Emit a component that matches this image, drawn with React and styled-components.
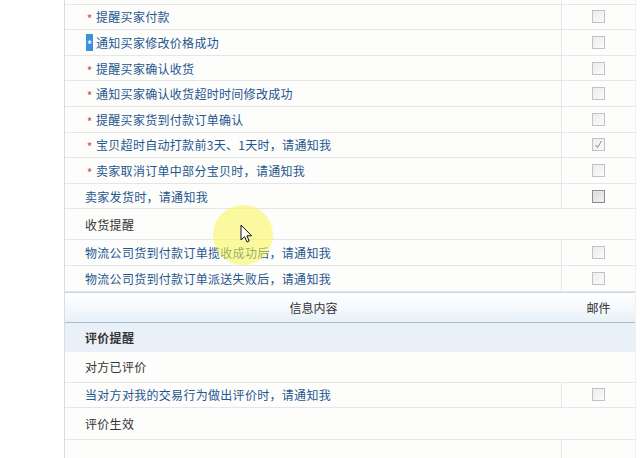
import React from 'react'
import styled, { createGlobalStyle } from 'styled-components'

const GlobalStyle = createGlobalStyle`
  html, body {
    margin: 0;
    padding: 0;
    background: #ffffff;
    overflow: hidden;
  }
  body {
    font-family: "Noto Sans CJK SC", "Liberation Sans", sans-serif;
    font-size: 12px;
  }
`

const items = [
    { text: '提醒买家付款', star: true },
    { text: '通知买家修改价格成功', star: true, selected: true },
    { text: '提醒买家确认收货', star: true },
    { text: '通知买家确认收货超时时间修改成功', star: true },
    { text: '提醒买家货到付款订单确认', star: true },
    { text: '宝贝超时自动打款前3天、1天时，请通知我', star: true, checked: true },
    { text: '卖家取消订单中部分宝贝时，请通知我', star: true },
    { text: '卖家发货时，请通知我', focus: true },
]

const receipt = [
    { text: '物流公司货到付款订单揽收成功后，请通知我' },
    { text: '物流公司货到付款订单派送失败后，请通知我' },
]

const App = () => {
    return (
        <>
            <GlobalStyle />
            <Page>
                <Table>
                    <Row>
                        <Cell />
                        <BoxCell />
                    </Row>
                    {items.map((it) => (
                        <ItemRow key={it.text} {...it} />
                    ))}
                    <SectionRow>收货提醒</SectionRow>
                    {receipt.map((it) => (
                        <ItemRow key={it.text} {...it} />
                    ))}
                    <Header>
                        <HeadCell>信息内容</HeadCell>
                        <HeadCell>邮件</HeadCell>
                    </Header>
                    <GroupRow>评价提醒</GroupRow>
                    <SectionRow>对方已评价</SectionRow>
                    <ItemRow text="当对方对我的交易行为做出评价时，请通知我" />
                    <SectionRow tall>评价生效</SectionRow>
                    <Row>
                        <Cell />
                        <BoxCell />
                    </Row>
                </Table>
                <Spot />
                <Cursor viewBox="0 0 12 19">
                    <path
                        d="M1 1 L1 16 L4.6 12.6 L7 18 L9.2 17 L6.9 11.8 L11.6 11.8 Z"
                        fill="#fff"
                        stroke="#111"
                        strokeWidth="1"
                        strokeLinejoin="round"
                    />
                </Cursor>
            </Page>
        </>
    )
}

const ItemRow = ({ text, star, selected, checked, focus }) => (
    <Row>
        <Cell>
            {star && <Star selected={selected}>*</Star>}
            <Link>{text}</Link>
        </Cell>
        <BoxCell>
            <Check checked={checked} focus={focus}>
                {checked && (
                    <svg width="9" height="9" viewBox="0 0 9 9">
                        <path d="M1.5 5 L3.5 7.5 L7.5 1" fill="none" stroke="#8a8a8a" strokeWidth="1" />
                    </svg>
                )}
            </Check>
        </BoxCell>
    </Row>
)

export default App

const Page = styled.div`
    position: relative;
    display: flow-root;
    width: 640px;
    height: 458px;
    overflow: hidden;
    padding-left: 64px;
    box-sizing: border-box;
`

const Table = styled.div`
    width: 570px;
    margin-top: -21px;
    border-left: 1px solid #d5dde6;
    border-right: 1px solid #eef0f2;
    background: #fdfdfb;
`

const Row = styled.div`
    display: grid;
    grid-template-columns: 1fr 73px;
    height: 25.6px;
    box-sizing: border-box;
    border-bottom: 1px solid #e4e6e8;
`

const Cell = styled.div`
    display: flex;
    align-items: center;
    padding-left: 20px;
    white-space: nowrap;
    border-right: 1px solid #e4e6e8;
`

const BoxCell = styled.div`
    display: flex;
    align-items: center;
    justify-content: center;
    padding-right: 1px;
`

const Star = styled.span`
    display: inline-block;
    width: 7px;
    height: 17px;
    line-height: 21px;
    margin-left: 1px;
    margin-right: 3px;
    text-align: center;
    font-size: 12px;
    color: ${(p) => (p.selected ? '#ffffff' : '#d24c46')};
    background: ${(p) => (p.selected ? '#3d8fe0' : 'transparent')};
`

const Link = styled.span`
    color: #1d5690;
    letter-spacing: 0.3px;
`

const Check = styled.span`
    display: flex;
    align-items: center;
    justify-content: center;
    width: 13px;
    height: 13px;
    box-sizing: border-box;
    border: 1px solid ${(p) => (p.focus ? '#8d8d8d' : '#c2c2c2')};
    background: ${(p) =>
        p.focus
            ? 'linear-gradient(135deg, #d8d8d8, #f4f4f4)'
            : 'linear-gradient(135deg, #ececec, #fbfbfb)'};
    box-shadow: ${(p) => (p.focus ? 'inset 0 0 0 1px #e8e8e8' : 'none')};
`

const SectionRow = styled.div`
    display: flex;
    align-items: center;
    height: ${(p) => (p.tall ? '32px' : '31px')};
    box-sizing: border-box;
    padding-left: 20px;
    color: #333333;
    letter-spacing: 0.3px;
    border-bottom: 1px solid #e4e6e8;
`

const Header = styled.div`
    display: grid;
    grid-template-columns: 1fr 73px;
    height: 31px;
    box-sizing: border-box;
    border-top: 1px solid #c9d7e6;
    border-bottom: 1px solid #a8bed6;
    background: linear-gradient(#ffffff, #f4f8fc 55%, #e7f0f8);
`

const HeadCell = styled.div`
    display: flex;
    align-items: center;
    justify-content: center;
    color: #333333;
    padding-top: 1px;
`

const GroupRow = styled.div`
    display: flex;
    align-items: center;
    height: 29px;
    box-sizing: border-box;
    padding-left: 20px;
    background: #e9f0f8;
    color: #333333;
    font-weight: bold;
    letter-spacing: 0.3px;
`

const Spot = styled.div`
    position: absolute;
    left: 213px;
    top: 205px;
    width: 60px;
    height: 60px;
    border-radius: 50%;
    background: rgba(250, 245, 80, 0.55);
    pointer-events: none;
`

const Cursor = styled.svg`
    position: absolute;
    left: 240px;
    top: 224px;
    width: 12px;
    height: 19px;
`
